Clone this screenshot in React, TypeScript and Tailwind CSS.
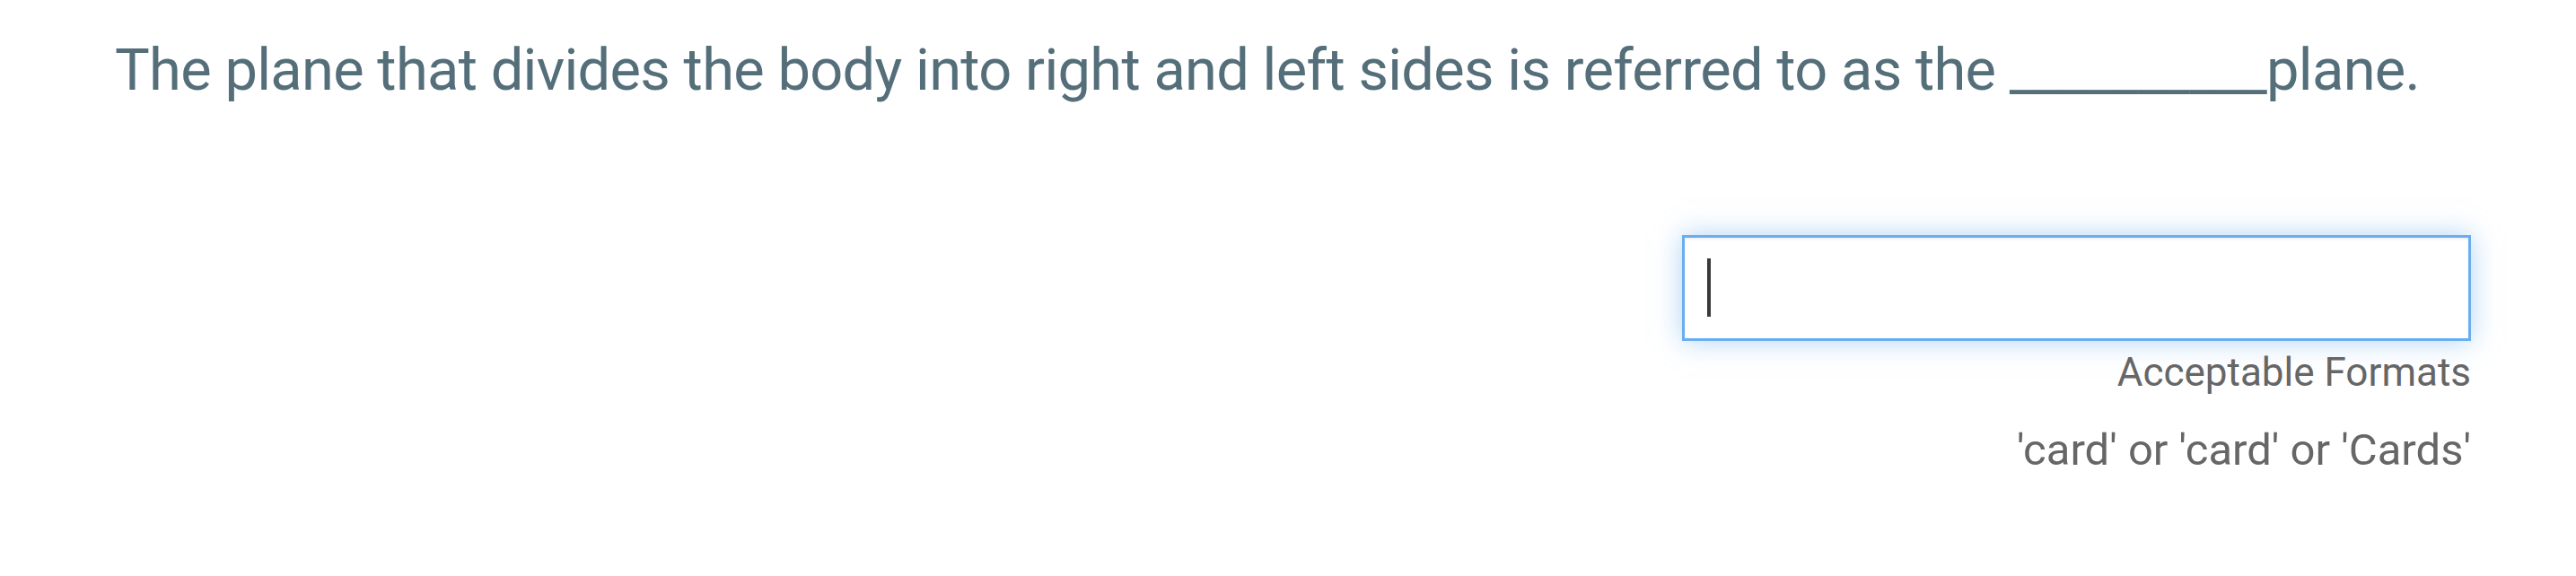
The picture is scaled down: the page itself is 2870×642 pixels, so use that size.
export default function App() {
  return (
    <div
      className="min-h-[642px] w-full bg-white pt-[40px] pl-[128px] pr-[117px]"
      style={{ fontFamily: "Roboto, 'Liberation Sans', sans-serif" }}
    >
      <p className="text-[65px] leading-[1.18] tracking-[-0.7px] text-[#546e7a] whitespace-nowrap">
        The plane that divides the body into right and left sides is referred to as the __________plane.
      </p>

      <div className="mt-[145px] flex flex-col items-end">
        <div className="flex h-[118px] w-[879px] items-center border-[3px] border-[#6aaef0] bg-white pl-[25px] shadow-[0_0_28px_rgba(110,175,240,0.55),inset_0_2px_3px_rgba(0,0,0,0.06)]">
          <span className="block h-[65px] w-[4px] bg-[#3a3a3a]" />
        </div>
        <p className="mt-[10px] text-[44px] leading-[1.172] text-[#666666]">Acceptable Formats</p>
        <p className="mt-[32px] text-[49px] leading-[1.172] text-[#666666]">
          'card' or 'card' or 'Cards'
        </p>
      </div>
    </div>
  );
}
